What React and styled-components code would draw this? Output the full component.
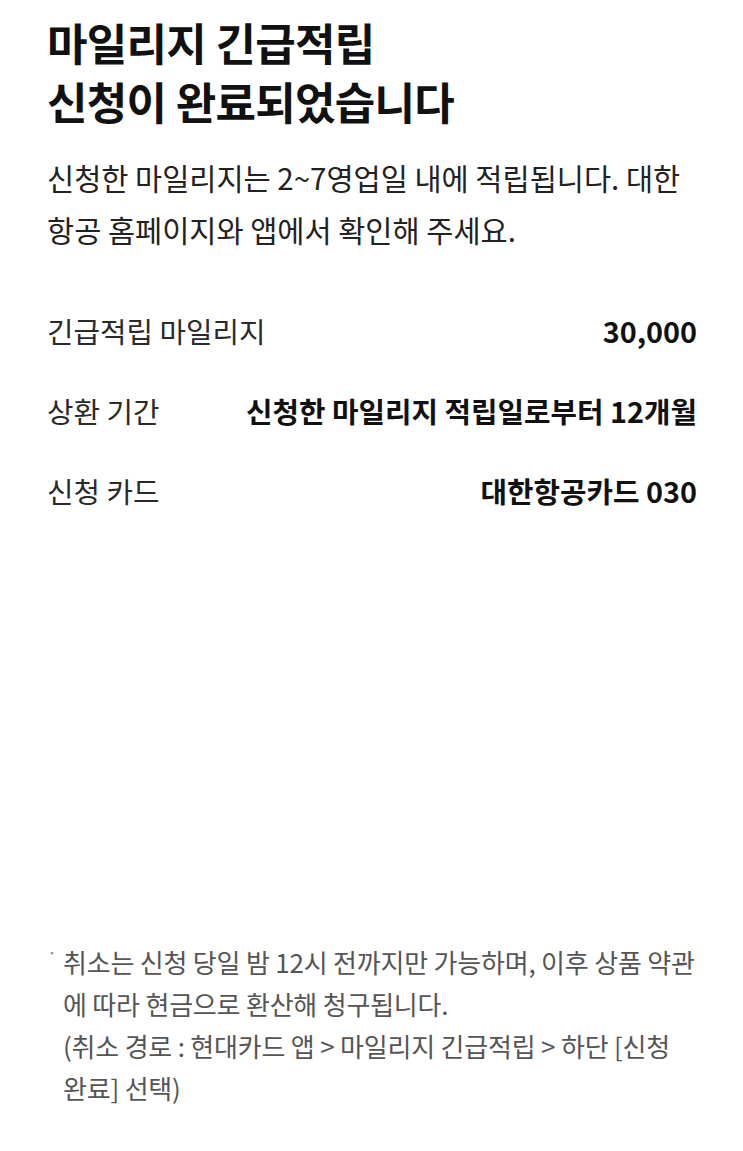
import styled, { createGlobalStyle } from 'styled-components'

const GlobalStyle = createGlobalStyle`
    * {
        box-sizing: border-box;
    }

    body {
        margin: 0;
        background-color: #ffffff;
        font-family: 'Noto Sans CJK KR', 'Noto Sans', sans-serif;
        color: #1a1a1a;
    }
`

const Page = styled.main`
    display: flex;
    flex-direction: column;

    min-height: 100vh;
    padding: 13px 46px 42px 47px;
`

const Title = styled.h1`
    margin: 0;

    font-size: 44px;
    font-weight: 700;
    line-height: 59px;
    letter-spacing: -0.7px;
    color: #111111;
`

const Lead = styled.p`
    margin: 20px 0 0;

    font-size: 29.5px;
    font-weight: 400;
    line-height: 52px;
    color: #222222;
`

const Details = styled.dl`
    display: flex;
    flex-direction: column;
    row-gap: 40px;

    margin: 56px 0 0;
`

const Row = styled.div`
    display: flex;
    align-items: center;
    justify-content: space-between;
    column-gap: 1rem;
`

const Term = styled.dt`
    font-size: 28.8px;
    line-height: 40px;
    color: #2a2a2a;
`

const Value = styled.dd`
    margin: 0;

    font-size: 28.8px;
    font-weight: 700;
    line-height: 40px;
    color: #111111;
    text-align: right;
`

const Notice = styled.div`
    display: flex;

    margin-top: auto;
`

const Bullet = styled.span`
    flex: 0 0 16px;

    font-size: 18px;
    line-height: 22px;
    color: #8a8a8a;
`

const NoticeText = styled.p`
    margin: 0;

    font-size: 26px;
    line-height: 42px;
    letter-spacing: -0.2px;
    color: #555555;
`

const details = [
    { term: '긴급적립 마일리지', value: '30,000' },
    { term: '상환 기간', value: '신청한 마일리지 적립일로부터 12개월' },
    { term: '신청 카드', value: '대한항공카드 030' },
]

export default function App() {
    return (
        <>
            <GlobalStyle />
            <Page>
                <Title>
                    마일리지 긴급적립
                    <br />
                    신청이 완료되었습니다
                </Title>
                <Lead>
                    신청한 마일리지는 2~7영업일 내에 적립됩니다. 대한항공 홈페이지와 앱에서 확인해 주세요.
                </Lead>

                <Details>
                    {details.map(({ term, value }) => (
                        <Row key={term}>
                            <Term>{term}</Term>
                            <Value>{value}</Value>
                        </Row>
                    ))}
                </Details>

                <Notice>
                    <Bullet>·</Bullet>
                    <NoticeText>
                        취소는 신청 당일 밤 12시 전까지만 가능하며, 이후 상품 약관에 따라 현금으로 환산해 청구됩니다.
                        <br />
                        (취소 경로 : 현대카드 앱 &gt; 마일리지 긴급적립 &gt; 하단 [신청 완료] 선택)
                    </NoticeText>
                </Notice>
            </Page>
        </>
    )
}
